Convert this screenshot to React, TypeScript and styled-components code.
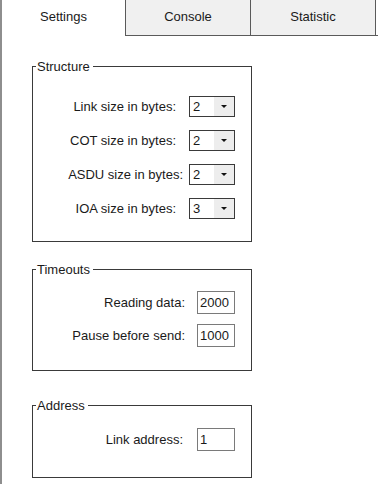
import React from "react";
import styled, { createGlobalStyle } from "styled-components";

const GlobalStyle = createGlobalStyle`
  html, body {
    margin: 0;
    padding: 0;
    background: #ffffff;
  }
  body {
    font-family: "Liberation Sans", Arial, sans-serif;
    font-size: 13px;
    color: #1a1a1a;
  }
`;

const Window = styled.div`
  width: 378px;
  height: 484px;
  box-sizing: border-box;
  border-left: 2px solid #8e8e8e;
  background: #ffffff;
  overflow: hidden;
`;

const TabStrip = styled.div`
  display: flex;
  height: 36px;
`;

const Tab = styled.div<{ $active?: boolean; $width: number; $last?: boolean }>`
  box-sizing: border-box;
  width: ${(p) => p.$width}px;
  height: 36px;
  display: flex;
  justify-content: center;
  align-items: center;
  padding-bottom: 3px;
  background: ${(p) => (p.$active ? "#ffffff" : "#f0f0f0")};
  border-left: ${(p) => (p.$active ? "none" : "1px solid #5a5a5a")};
  border-right: ${(p) => (p.$last ? "1px solid #5a5a5a" : "none")};
  border-bottom: ${(p) => (p.$active ? "none" : "1px solid #5a5a5a")};
`;

const TabFiller = styled.div`
  flex: 1;
  border-bottom: 1px solid #5a5a5a;
`;

const Content = styled.div`
  display: flex;
  flex-direction: column;
  width: 220px;
  padding-left: 30px;
`;

const Group = styled.fieldset<{ $top: number; $padTop: number; $padBottom: number; $gap: number }>`
  margin: ${(p) => p.$top}px 0 0 0;
  padding: ${(p) => p.$padTop}px 0 ${(p) => p.$padBottom}px 0;
  min-width: 0;
  border: 1px solid #3a3a3a;
  display: flex;
  flex-direction: column;
  gap: ${(p) => p.$gap}px;
`;

const Legend = styled.legend`
  padding: 0 3px 0 1px;
  margin-left: 3px;
  line-height: 15px;
  font-size: 13px;
`;

const Row = styled.div<{ $gap: number }>`
  display: flex;
  align-items: center;
  gap: ${(p) => p.$gap}px;
`;

const Label = styled.span<{ $width: number }>`
  width: ${(p) => p.$width}px;
  text-align: right;
  white-space: nowrap;
`;

const Combo = styled.div`
  box-sizing: border-box;
  width: 46px;
  height: 21px;
  border: 1px solid #3a3a3a;
  display: flex;
  background: #ffffff;
`;

const ComboValue = styled.span`
  flex: 1;
  padding-left: 3px;
  line-height: 19px;
`;

const ComboButton = styled.span`
  width: 20px;
  background: #ededed;
  display: flex;
  align-items: center;
  justify-content: center;
`;

const Arrow = styled.span`
  width: 0;
  height: 0;
  border-left: 3px solid transparent;
  border-right: 3px solid transparent;
  border-top: 3px solid #111;
`;

const TextBox = styled.div`
  box-sizing: border-box;
  width: 38px;
  height: 23px;
  border: 1px solid #7a7a7a;
  padding-left: 2px;
  line-height: 21px;
  background: #ffffff;
`;

const combos = [
  { label: "Link size in bytes:", value: "2", width: 143, gap: 13 },
  { label: "COT size in bytes:", value: "2", width: 143, gap: 13 },
  { label: "ASDU size in bytes:", value: "2", width: 150, gap: 6 },
  { label: "IOA size in bytes:", value: "3", width: 143, gap: 13 },
];

export default function App() {
  return (
    <>
      <GlobalStyle />
      <Window>
        <TabStrip>
          <Tab $active $width={123}>Settings</Tab>
          <Tab $width={125}>Console</Tab>
          <Tab $width={126} $last>Statistic</Tab>
          <TabFiller />
        </TabStrip>
        <Content>
          <Group $top={23} $padTop={22} $padBottom={22} $gap={13}>
            <Legend>Structure</Legend>
            {combos.map((c) => (
              <Row key={c.label} $gap={c.gap}>
                <Label $width={c.width}>{c.label}</Label>
                <Combo>
                  <ComboValue>{c.value}</ComboValue>
                  <ComboButton>
                    <Arrow />
                  </ComboButton>
                </Combo>
              </Row>
            ))}
          </Group>
          <Group $top={20} $padTop={14} $padBottom={23} $gap={10}>
            <Legend>Timeouts</Legend>
            <Row $gap={12}>
              <Label $width={152}>Reading data:</Label>
              <TextBox>2000</TextBox>
            </Row>
            <Row $gap={12}>
              <Label $width={152}>Pause before send:</Label>
              <TextBox>1000</TextBox>
            </Row>
          </Group>
          <Group $top={27} $padTop={15} $padBottom={26} $gap={0}>
            <Legend>Address</Legend>
            <Row $gap={14}>
              <Label $width={150}>Link address:</Label>
              <TextBox>1</TextBox>
            </Row>
          </Group>
        </Content>
      </Window>
    </>
  );
}
